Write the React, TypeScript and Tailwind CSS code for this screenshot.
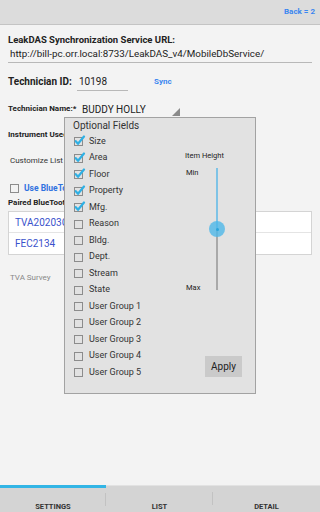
import React from "react";

const font = { fontFamily: "Roboto, 'Noto Sans', sans-serif" };

function Check({ checked }: { checked: boolean }) {
  return (
    <svg width="14" height="12" viewBox="0 0 14 12" className="shrink-0">
      <rect x="1.5" y="2.5" width="8" height="8" fill="none" stroke="#8c8c8c" strokeWidth="1" />
      {checked && (
        <path d="M2.8 6.2 L5 8.8 L11 1.5" fill="none" stroke="#2fb0e4" strokeWidth="2.2" strokeLinecap="round" strokeLinejoin="round" />
      )}
    </svg>
  );
}

const fields: [string, boolean][] = [
  ["Size", true],
  ["Area", true],
  ["Floor", true],
  ["Property", true],
  ["Mfg.", true],
  ["Reason", false],
  ["Bldg.", false],
  ["Dept.", false],
  ["Stream", false],
  ["State", false],
  ["User Group 1", false],
  ["User Group 2", false],
  ["User Group 3", false],
  ["User Group 4", false],
  ["User Group 5", false],
];

export default function App() {
  return (
    <div style={font} className="relative w-[320px] h-[512px] overflow-hidden bg-[#f3f3f3] flex flex-col text-[#222]">
      {/* header */}
      <div className="h-[25px] shrink-0 bg-[#dcdcdc] border-b border-[#c4c4c4] flex items-center justify-end pr-[5px]">
        <span className="text-[8px] font-bold text-[#3a86f0]">Back = 2</span>
      </div>

      {/* content */}
      <div className="flex-1 flex flex-col px-[8px]">
        <div className="mt-[9px] h-[12px] flex items-center text-[9.5px] font-bold">LeakDAS Synchronization Service URL:</div>
        <div className="h-[17px] flex items-center pl-[2px] text-[9.8px] border-b border-[#b8b8b8]">
          http://bill-pc.orr.local:8733/LeakDAS_v4/MobileDbService/
        </div>
        <div className="mt-[9px] h-[19px] flex items-center">
          <span className="text-[10px] font-bold w-[69px]">Technician ID:</span>
          <span className="h-full w-[51px] flex items-center pl-[2px] text-[10px] border-b border-[#b8b8b8]">10198</span>
          <span className="ml-[26px] text-[8px] font-bold text-[#3a86f0]">Sync</span>
        </div>
        <div className="mt-[10px] h-[16px] flex items-center relative">
          <span className="text-[8px] font-bold w-[74px]">Technician Name:*</span>
          <span className="text-[10px]">BUDDY HOLLY</span>
          <svg width="8" height="8" viewBox="0 0 8 8" className="absolute left-[164px] top-[7px]">
            <path d="M8 0 L8 8 L0 8 Z" fill="#8a8a8a" />
          </svg>
        </div>
        <div className="mt-[10px] h-[16px] flex items-center text-[8px] font-bold">Instrument Used</div>
        <div className="mt-[10px] h-[16px] flex items-center pl-[2px] text-[8px] text-[#333]">Customize List</div>
        <div className="mt-[11px] h-[16px] flex items-center pl-[2px] gap-[5px]">
          <span className="w-[9px] h-[9px] border border-[#8c8c8c]" />
          <span className="text-[8.5px] font-bold text-[#2f72e0]">Use BlueTooth</span>
        </div>
        <div className="mt-[1px] h-[12px] flex items-center text-[8px] font-bold">Paired BlueTooth Devices</div>
        <div className="mt-[2px] h-[44px] bg-white border border-[#d4d4d4] flex flex-col">
          <div className="h-[21px] flex items-center pl-[6px] text-[10px] text-[#3a52cc] border-b border-[#e4e4e4]">TVA20203C</div>
          <div className="h-[21px] flex items-center pl-[6px] text-[10px] text-[#3a52cc]">FEC2134</div>
        </div>
        <div className="mt-[16px] h-[14px] flex items-center pl-[2px] text-[8px] text-[#888]">TVA Survey</div>
      </div>

      {/* tab bar */}
      <div className="h-[27px] shrink-0 bg-[#d4d4d4] border-t border-[#e2e2e2] flex">
        <div className="w-[106px] flex flex-col border-t-[3px] border-[#33b5e5] -mt-[1px] relative">
          <div className="flex-1 flex items-end justify-center text-[7.5px] font-bold text-[#333]">SETTINGS</div>
          <div className="absolute right-0 top-[5px] h-[13px] w-px bg-[#c2c2c2]" />
        </div>
        <div className="w-[107px] flex flex-col relative">
          <div className="flex-1 flex items-end justify-center text-[7.5px] font-bold text-[#333]">LIST</div>
          <div className="absolute right-0 top-[6px] h-[13px] w-px bg-[#c2c2c2]" />
        </div>
        <div className="flex-1 flex flex-col">
          <div className="flex-1 flex items-end justify-center text-[7.5px] font-bold text-[#333]">DETAIL</div>
        </div>
      </div>

      {/* popup */}
      <div className="absolute left-[64px] top-[117px] w-[192px] h-[277px] bg-[#e2e2e2] border border-[#a2a2a2] flex">
        <div className="w-[120px] flex flex-col pl-[8px]">
          <div className="h-[15px] flex items-center text-[10px] text-[#333]">Optional Fields</div>
          {fields.map(([label, checked]) => (
            <div key={label} className="h-[16.5px] flex items-center gap-[2px]">
              <Check checked={checked} />
              <span className="text-[9px] text-[#333]">{label}</span>
            </div>
          ))}
        </div>
        <div className="flex-1 flex flex-col">
          <div className="mt-[32px] h-[12px] flex items-center text-[7.5px] text-[#222]">Item Height</div>
          <div className="mt-[5px] flex">
            <div className="w-[31px] h-[126px] flex flex-col justify-between text-[7.5px] text-[#222] pl-[1px]">
              <span>Min</span>
              <span>Max</span>
            </div>
            <div className="relative w-[2px] h-[122px] mt-[1px] flex flex-col">
              <div className="h-[61px] bg-[#7ec3e6]" />
              <div className="flex-1 bg-[#a9a9a9]" />
              <div className="absolute left-[-7px] top-[53px] w-[16px] h-[16px] rounded-full bg-[#4fb8e8]/80 flex items-center justify-center">
                <div className="w-[3px] h-[3px] rounded-full bg-[#2aa5dc]" />
              </div>
            </div>
          </div>
          <div className="mt-[63px] ml-[20px] w-[37px] h-[21px] bg-[#cacaca] flex items-center justify-center text-[10px] text-[#222]">
            Apply
          </div>
        </div>
      </div>
    </div>
  );
}
